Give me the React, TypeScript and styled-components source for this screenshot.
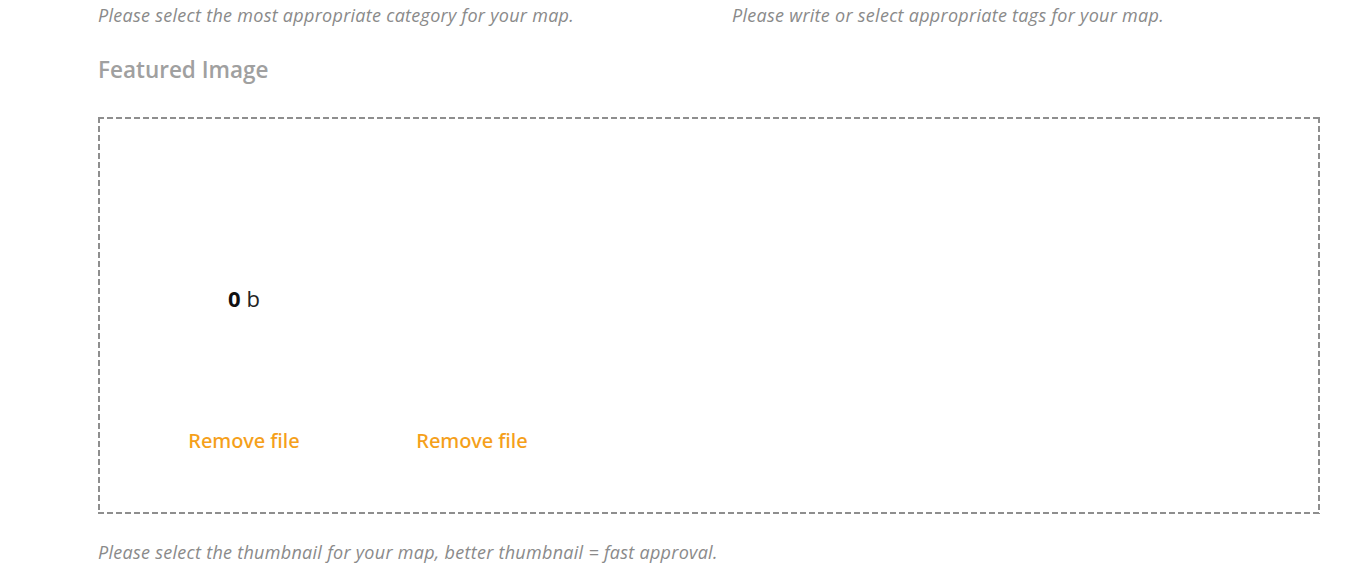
import styled, { createGlobalStyle } from "styled-components";

const GlobalStyle = createGlobalStyle`
  body {
    margin: 0;
    background: #ffffff;
    font-family: "Open Sans", "Noto Sans", sans-serif;
  }
`;

const Page = styled.div`
  padding: 0 44px 0 98px;
`;

const HelpRow = styled.div`
  display: grid;
  grid-template-columns: 634px 1fr;
  padding-top: 3px;
`;

const HelpText = styled.p`
  margin: 0;
  font-style: italic;
  font-size: 18px;
  line-height: 24px;
  letter-spacing: 0.28px;
  color: #8a8a8a;
`;

const SectionTitle = styled.h3`
  margin: 28px 0 0;
  font-size: 22.5px;
  line-height: 30px;
  font-weight: 600;
  color: #a0a0a0;
`;

// dashed frame drawn with gradients so the dash rhythm (6 on, 3 off) matches
const dash = "#8e8e8e";
const DropZone = styled.div`
  box-sizing: border-box;
  margin-top: 32px;
  height: 397px;
  display: flex;
  gap: 48px;
  padding: 169px 0 0 56px;
  background-image:
    repeating-linear-gradient(to right, ${dash} 0 6px, transparent 6px 9px),
    repeating-linear-gradient(to right, ${dash} 0 6px, transparent 6px 9px),
    repeating-linear-gradient(to bottom, ${dash} 0 6px, transparent 6px 9px),
    repeating-linear-gradient(to bottom, ${dash} 0 6px, transparent 6px 9px);
  background-size: 100% 2px, 100% 2px, 2px 100%, 2px 100%;
  background-position: left top, left bottom, left top, right top;
  background-repeat: no-repeat;
`;

const Preview = styled.div`
  width: 180px;
  display: flex;
  flex-direction: column;
  align-items: center;
`;

const Size = styled.div<{ $hidden?: boolean }>`
  font-size: 22px;
  line-height: 24px;
  color: #222;
  visibility: ${(p) => (p.$hidden ? "hidden" : "visible")};
  & strong {
    font-weight: 700;
    color: #111;
  }
`;

const RemoveLink = styled.a`
  margin-top: 119px;
  font-family: "Noto Sans", "Open Sans", sans-serif;
  font-size: 20px;
  line-height: 24px;
  font-weight: 500;
  color: #f5a01a;
  cursor: pointer;
  text-decoration: none;
`;

const FooterHelp = styled(HelpText)`
  margin-top: 26px;
`;

export default function App() {
  return (
    <>
      <GlobalStyle />
      <Page>
        <HelpRow>
          <HelpText>Please select the most appropriate category for your map.</HelpText>
          <HelpText>Please write or select appropriate tags for your map.</HelpText>
        </HelpRow>
        <SectionTitle>Featured Image</SectionTitle>
        <DropZone>
          <Preview>
            <Size>
              <strong>0</strong> b
            </Size>
            <RemoveLink>Remove file</RemoveLink>
          </Preview>
          <Preview>
            <Size $hidden>
              <strong>0</strong> b
            </Size>
            <RemoveLink>Remove file</RemoveLink>
          </Preview>
        </DropZone>
        <FooterHelp>Please select the thumbnail for your map, better thumbnail = fast approval.</FooterHelp>
      </Page>
    </>
  );
}
